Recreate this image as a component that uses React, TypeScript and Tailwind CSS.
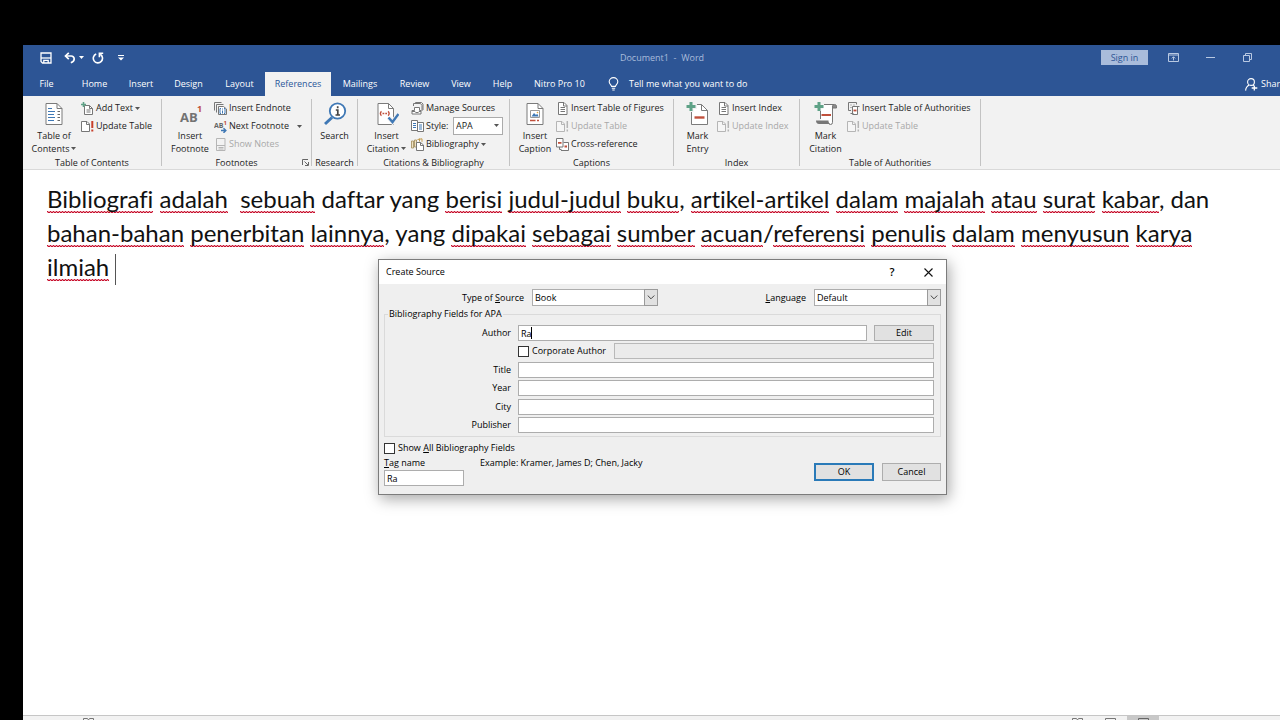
import React from "react";

type IconProps = { className?: string };

const GREEN = "#5fa287";
const RED = "#c0503c";
const BLUE = "#3f78b5";

/* ---------- Title bar icons ---------- */

function SaveIcon() {
  return (
    <svg width="12" height="12" viewBox="0 0 12 12" fill="none" stroke="#fff" strokeWidth="1.3">
      <path d="M1 1h10v10H2.5L1 9.5z" />
      <path d="M1 6h10" />
      <path d="M3.8 11V8.3h4.4V11" />
    </svg>
  );
}

function UndoIcon() {
  return (
    <svg width="12" height="12" viewBox="0 0 12 12" fill="none" stroke="#fff" strokeWidth="1.7">
      <path d="M1.5 4h5.7a3 3 0 0 1 3 3c0 2-1.4 3.2-3.4 3.8" />
      <path d="M4.8.8 1.5 4l3.3 3.2" />
    </svg>
  );
}

function RepeatIcon() {
  return (
    <svg width="12" height="12" viewBox="0 0 12 12" fill="none" stroke="#fff" strokeWidth="1.6">
      <path d="M4.2 2A4.600 4.600 0 1 0 8.200 2.300" />
      <path d="M11.200 1.200H7.400v4" />
    </svg>
  );
}

function CustomizeIcon() {
  return (
    <svg width="6" height="6" viewBox="0 0 6 6" fill="#fff">
      <path d="M0 0h6v1H0zM0 2.4h6L3 5.6z" />
    </svg>
  );
}

function Caret({ className = "text-[#555]" }: IconProps) {
  return (
    <svg width="5" height="3" viewBox="0 0 5 3" fill="currentColor" className={`shrink-0 ${className}`}>
      <path d="M0 0h5L2.5 3z" />
    </svg>
  );
}

function RibbonOptionsIcon() {
  return (
    <svg width="11" height="9" viewBox="0 0 11 9" fill="none" stroke="#b9c9e2" strokeWidth="1">
      <path d="M.5.5h10v8H.5zM.5 2h10M5.5 7.4V4M3.8 5.4l1.7-1.7 1.7 1.7" />
    </svg>
  );
}

function MinimizeIcon() {
  return (
    <svg width="9" height="9" viewBox="0 0 9 9" stroke="#b9c9e2">
      <path d="M0 4.5h9" />
    </svg>
  );
}

function RestoreIcon() {
  return (
    <svg width="9" height="9" viewBox="0 0 9 9" fill="none" stroke="#b9c9e2">
      <path d="M.5 2.5h6v6h-6zM2.5 2.500V.5h6v6H6.500" />
    </svg>
  );
}

function BulbIcon() {
  return (
    <svg width="11" height="14" viewBox="0 0 11 14" fill="none" stroke="#fff" strokeWidth="1.1">
      <path d="M3.600 9.400C3.400 7.800 1.200 7 1.200 4.700a4.300 4.100 0 0 1 8.600 0C9.800 7 7.600 7.800 7.400 9.400z" />
      <path d="M3.800 11.300h3.400M4.300 13h2.400" />
    </svg>
  );
}

function ShareIcon() {
  return (
    <svg width="13" height="13" viewBox="0 0 13 13" fill="none" stroke="#fff" strokeWidth="1.1">
      <circle cx="6" cy="4" r="3.400" />
      <path d="M.6 12.600C.8 9.600 2.200 8 4.200 7M7.800 7l1 .7" />
      <path d="M9.300 7.400v5.200M6.700 10h5.600" strokeWidth="1.300" />
    </svg>
  );
}

/* ---------- Large ribbon icons ---------- */

function TocIcon() {
  return (
    <svg width="24" height="24" viewBox="0 0 24 24" fill="none">
      <path d="M4 1.500h11l5 5v16H4z" fill="#fff" stroke="#7b7b7b" />
      <path d="M15 1.500v5h5" stroke="#7b7b7b" />
      <path d="M6 6.500h4M6 9.500h7M6 12.500h6M6 15.500h7M6 18.500h6" stroke={BLUE} strokeWidth="1.200" />
      <path d="M15.500 9.500H18M15.500 12.500H18M15.500 15.500H18M15.500 18.500H18" stroke="#666" />
    </svg>
  );
}

function FootnoteIcon() {
  return (
    <svg width="24" height="24" viewBox="0 0 24 24">
      <text x="2" y="20" fontSize="13" fontWeight="700" fontFamily="Open Sans, sans-serif" fill="#737373">AB</text>
      <text x="19" y="10" fontSize="9" fontWeight="700" fontFamily="Open Sans, sans-serif" fill={RED}>1</text>
    </svg>
  );
}

function SearchInfoIcon() {
  return (
    <svg width="24" height="24" viewBox="0 0 24 24" fill="none">
      <path d="M9 15.500 2 22" stroke={BLUE} strokeWidth="3" />
      <circle cx="14.500" cy="9" r="7.700" fill="#fff" stroke={BLUE} strokeWidth="1.800" />
      <path d="M14.700 4.300v2M12.800 8h2v5M12.500 13h4.500" stroke="#444" strokeWidth="1.700" />
    </svg>
  );
}

function CitationIcon() {
  return (
    <svg width="24" height="24" viewBox="0 0 24 24" fill="none">
      <path d="M3 1.500h10.500l5 5v16H3z" fill="#fff" stroke="#7b7b7b" />
      <path d="M13.500 1.500v5h5" stroke="#7b7b7b" />
      <path d="M6.500 9.300c-1.500 1-1.500 3.400 0 4.400M13 9.300c1.500 1 1.500 3.400 0 4.400M7.500 11.500h1.800M10.300 11.500H12" stroke={RED} strokeWidth="1.400" />
      <path d="m13.500 15.500 4 4.500 6-8" stroke="#f2f2f2" strokeWidth="4.500" />
      <path d="m13.500 15.500 4 4.500 6-8" stroke={BLUE} strokeWidth="2.400" />
    </svg>
  );
}

function CaptionIcon() {
  return (
    <svg width="24" height="24" viewBox="0 0 24 24" fill="none">
      <path d="M4 1.500h11l5 5v16H4z" fill="#fff" stroke="#7b7b7b" />
      <path d="M15 1.500v5h5" stroke="#7b7b7b" />
      <path d="M7.500 8.500h9v7h-9z" stroke="#999" />
      <path d="m8.500 14.500 2.500-3.500 2 2 1.200-1.300 1.500 2.800z" fill={BLUE} />
      <circle cx="14.500" cy="10.500" r=".8" fill="#e0a33c" />
      <path d="M7 18.500h5.500M14 18.500h2" stroke={RED} strokeWidth="1.300" />
    </svg>
  );
}

function MarkEntryIcon() {
  return (
    <svg width="24" height="24" viewBox="0 0 24 24" fill="none">
      <path d="M5.500 8V22.500h16V8.500l-6-6H10" fill="#fff" stroke="#7b7b7b" />
      <path d="M15.500 2.500v6h6" stroke="#7b7b7b" />
      <path d="M5 0v10M0 4.500h11" stroke="#f2f2f2" strokeWidth="5" />
      <path d="M5 0v9M.5 4.500h9" stroke={GREEN} strokeWidth="3" />
      <path d="M8.500 15.500h10" stroke={RED} strokeWidth="2.400" />
    </svg>
  );
}

function MarkCitationIcon() {
  return (
    <svg width="24" height="24" viewBox="0 0 24 24" fill="none">
      <path d="M6.500 18V2.500h12V19l-2 3H8z" fill="#fff" />
      <path d="M6.500 17V8M10 2.500h10M18.500 4v16.500a2 2 0 0 1-4 0" stroke="#777" />
      <path d="M18.500 7V4.200c0-2.300 4-2.300 4 0V6h-4" fill="#8b8b8b" stroke="#777" />
      <path d="M2 18.500h12.500c0 2 .5 3.500 2 3.500H5c-2 0-3-1.500-3-3.500z" fill="#777" />
      <path d="M5 0v9M.5 4.500h9" stroke="#f2f2f2" strokeWidth="4.500" />
      <path d="M5 0v9M.5 4.500h9" stroke={GREEN} strokeWidth="3" />
      <path d="M7.500 13h9.500" stroke={RED} strokeWidth="2" />
    </svg>
  );
}

/* ---------- Small ribbon icons ---------- */

function Small({ children }: { children: React.ReactNode }) {
  return (
    <svg width="13" height="13" viewBox="0 0 13 13" fill="none" className="shrink-0">
      {children}
    </svg>
  );
}

const AddTextIcon = () => (
  <Small>
    <path d="M3.500 3.500h5l3 3v6h-8z" fill="#fff" stroke="#777" />
    <path d="M8.500 3.500v3h3M5.500 8h4M5.500 10h4" stroke="#777" />
    <path d="M2.500 0v5M0 2.500h5" stroke={GREEN} strokeWidth="1.600" />
  </Small>
);

const UpdateIcon = ({ dim = false }: { dim?: boolean }) => (
  <Small>
    <path d="M.5 1.500H6l2.500 2.500v7.500h-8z" fill={dim ? "#f6f6f6" : "#fff"} stroke={dim ? "#b5b5b5" : "#777"} />
    <path d="M5.500 1.500V4.500h3" stroke={dim ? "#b5b5b5" : "#777"} />
    <path d="M11.300 1v7M11.300 9.500v2" stroke={dim ? "#b5b5b5" : "#c8402c"} strokeWidth={dim ? 1.5 : 2} />
  </Small>
);

const EndnoteIcon = () => (
  <Small>
    <path d="M.5 8.500v-8h7M2.500 10.500v-8h7" stroke="#777" />
    <path d="M4.500 4.500h5l3 2.500v5.500h-8z" fill="#fff" stroke="#777" />
    <path d="M7 6.500H6v5h1M10 6.500h1v5h-1M8.500 6.500v1M8.500 8.500v3" stroke={BLUE} />
  </Small>
);

const NextFootnoteIcon = () => (
  <Small>
    <text x="0" y="8" fontSize="7" fontWeight="700" fontFamily="Open Sans, sans-serif" fill="#666">AB</text>
    <text x="9.500" y="5" fontSize="6" fontWeight="700" fontFamily="Open Sans, sans-serif" fill={RED}>1</text>
    <path d="M7 10.500h4M9.500 8.200l2.300 2.300-2.300 2.300" stroke={BLUE} strokeWidth="1.500" />
  </Small>
);

const NotesIcon = () => (
  <Small>
    <path d="M2.500.5h8.500v12H2.500zM2.500 7.500h8.500M4.500 9.500h5M4.500 11h5" stroke="#b5b5b5" />
  </Small>
);

const ManageIcon = () => (
  <Small>
    <path d="M2.500 4V1.500h7l1.500 2V9M4.500 1.500V.5h6l1.500 1.500V8" stroke="#777" />
    <path d="M3.500 5.500h5v3h1.500v3.500h-9V8.500h2.500z" fill="#fff" stroke="#777" />
    <path d="M1 9.500h3l.7 1h2.600l.7-1h2" stroke="#777" />
  </Small>
);

const StyleIcon = () => (
  <Small>
    <path d="M.5.5h6v10h-6zM6.500 2.500h6v9h-6z" fill="#fff" stroke="#777" />
    <path d="M2 3.500h3M2 5.500h3M2 7.500h3" stroke={BLUE} />
    <path d="M8 5h3M8 7h3M8 9h3" stroke={BLUE} />
  </Small>
);

const BibliographyIcon = () => (
  <Small>
    <path d="M.5 3h2v7h-2zM3.500 2h2v7h-2z" fill="#efe3c4" stroke="#a08a58" strokeWidth=".8" />
    <path d="M6.500 1.500 11 .8v3M8.500.5v3" stroke="#c39b4a" />
    <path d="M5.500 4.500h4l3 2.500v5.500h-7z" fill="#fff" stroke="#777" />
    <path d="M9.500 4.500V7.500h3" stroke="#777" />
  </Small>
);

const PageIcon = () => (
  <Small>
    <path d="M2.500.5h5.500l3 3v9H2.500z" fill="#fff" stroke="#777" />
    <path d="M7.500.5v3.500h3.500M4.500 5.500h4.500M4.500 7.500h4.500M4.500 9.500h4.500" stroke="#777" />
  </Small>
);

const CrossRefIcon = () => (
  <Small>
    <path d="M.5.500h6.500v8.500H.5zM7.500 4.500h5v8H5" fill="#fff" stroke="#777" />
    <path d="M2 4.800h3.500M8.500 8.500h2.500" stroke={RED} strokeWidth="1.800" />
    <path d="M3.500 9v2.500h2" stroke="#777" />
  </Small>
);

const AuthoritiesIcon = () => (
  <Small>
    <path d="M1.500 8.500V.5h8v2M1.500 8.500H4" stroke="#777" />
    <path d="M3.500 3h1M6.500 3h1M3.500 5.500h1" stroke="#777" />
    <path d="M5.500 4.500h7M5.500 4.500v8h5v-8" fill="#fff" stroke="#777" />
    <path d="M6.500 8.500h3" stroke={RED} strokeWidth="1.800" />
    <path d="M3.500 11.500h3" stroke="#777" />
  </Small>
);

const LauncherIcon = () => (
  <svg width="7" height="7" viewBox="0 0 7 7" fill="none" stroke="#666">
    <path d="M.5 6V.5H6M2.500 2.500l3.500 3.500M6.500 3v3.500H3" />
  </svg>
);

/* ---------- Ribbon pieces ---------- */

function BigButton({
  icon,
  lines,
  caret,
  className = "",
}: {
  icon: React.ReactNode;
  lines: string[];
  caret?: boolean;
  className?: string;
}) {
  return (
    <button type="button" className={`flex shrink-0 flex-col items-center pt-[3px] text-center leading-[13px] ${className}`}>
      {icon}
      {lines.map((line, i) => (
        <span key={line} className={`flex items-center gap-[2px] whitespace-nowrap ${i === 0 ? "mt-[3px]" : ""}`}>
          {line}
          {caret && i === lines.length - 1 && <Caret />}
        </span>
      ))}
    </button>
  );
}

function Item({
  icon,
  children,
  caret,
  disabled,
}: {
  icon: React.ReactNode;
  children: React.ReactNode;
  caret?: "near" | "far";
  disabled?: boolean;
}) {
  return (
    <button
      type="button"
      disabled={disabled}
      className={`flex h-[18px] items-center gap-[2px] whitespace-nowrap ${disabled ? "text-[#a8a8a8]" : ""}`}
    >
      {icon}
      <span>{children}</span>
      {caret && <Caret className={caret === "far" ? "ml-[6px] text-[#555]" : "text-[#555]"} />}
    </button>
  );
}

function Group({
  title,
  className,
  launcher,
  children,
}: {
  title: string;
  className: string;
  launcher?: boolean;
  children: React.ReactNode;
}) {
  return (
    <section
      aria-label={title}
      className={`my-[3px] flex shrink-0 flex-col justify-between border-r border-[#c3c3c3] ${className}`}
    >
      <div className="flex">{children}</div>
      <div className="flex h-[7px] items-center">
        <h2 className="flex-1 text-center whitespace-nowrap">{title}</h2>
        {launcher && (
          <button type="button" aria-label={`${title} settings`} className="-ml-[9px] mr-[2px]">
            <LauncherIcon />
          </button>
        )}
      </div>
    </section>
  );
}

function Tab({ children, active, className }: { children: string; active?: boolean; className: string }) {
  return (
    <button
      type="button"
      role="tab"
      aria-selected={!!active}
      className={`h-full shrink-0 text-center whitespace-nowrap ${active ? "bg-[#f2f2f2] text-[#2b579a]" : "text-white"} ${className}`}
    >
      {children}
    </button>
  );
}

function Ribbon() {
  return (
    <div className="flex h-[74px] border-b border-[#d9d9d9] bg-[#f2f2f2] text-[9px] text-[#222]">
      <Group title="Table of Contents" className="w-[139px]">
        <BigButton className="w-[58px] pl-[4px]" icon={<TocIcon />} lines={["Table of", "Contents"]} caret />
        <div className="flex flex-col">
          <Item icon={<AddTextIcon />} caret="near">Add Text</Item>
          <Item icon={<UpdateIcon />}>Update Table</Item>
        </div>
      </Group>
      <Group title="Footnotes" className="w-[150px]" launcher>
        <BigButton className="w-[52px] pl-[4px]" icon={<FootnoteIcon />} lines={["Insert", "Footnote"]} />
        <div className="flex flex-col">
          <Item icon={<EndnoteIcon />}>Insert Endnote</Item>
          <Item icon={<NextFootnoteIcon />} caret="far">Next Footnote</Item>
          <Item icon={<NotesIcon />} disabled>Show Notes</Item>
        </div>
      </Group>
      <Group title="Research" className="w-[46px]">
        <BigButton className="w-full" icon={<SearchInfoIcon />} lines={["Search"]} />
      </Group>
      <Group title="Citations & Bibliography" className="w-[152px]">
        <BigButton className="w-[53px] pl-[4px]" icon={<CitationIcon />} lines={["Insert", "Citation"]} caret />
        <div className="flex flex-col">
          <Item icon={<ManageIcon />}>Manage Sources</Item>
          <div className="flex h-[18px] items-center gap-[2px]">
            <StyleIcon />
            <label htmlFor="citation-style" className="w-[25px]">Style:</label>
            <span className="relative flex">
              <select
                id="citation-style"
                defaultValue="APA"
                className="h-[18px] w-[50px] appearance-none border border-[#ababab] bg-white px-[2px]"
              >
                <option>APA</option>
              </select>
              <span className="pointer-events-none absolute top-[7px] right-1">
                <Caret />
              </span>
            </span>
          </div>
          <Item icon={<BibliographyIcon />} caret="near">Bibliography</Item>
        </div>
      </Group>
      <Group title="Captions" className="w-[164px]">
        <BigButton className="w-[46px] pl-[4px]" icon={<CaptionIcon />} lines={["Insert", "Caption"]} />
        <div className="flex flex-col">
          <Item icon={<PageIcon />}>Insert Table of Figures</Item>
          <Item icon={<UpdateIcon dim />} disabled>Update Table</Item>
          <Item icon={<CrossRefIcon />}>Cross-reference</Item>
        </div>
      </Group>
      <Group title="Index" className="w-[126px]">
        <BigButton className="w-[43px] pl-[4px]" icon={<MarkEntryIcon />} lines={["Mark", "Entry"]} />
        <div className="flex flex-col">
          <Item icon={<PageIcon />}>Insert Index</Item>
          <Item icon={<UpdateIcon dim />} disabled>Update Index</Item>
        </div>
      </Group>
      <Group title="Table of Authorities" className="w-[181px]">
        <BigButton className="w-[47px] pl-[4px]" icon={<MarkCitationIcon />} lines={["Mark", "Citation"]} />
        <div className="flex flex-col">
          <Item icon={<AuthoritiesIcon />}>Insert Table of Authorities</Item>
          <Item icon={<UpdateIcon dim />} disabled>Update Table</Item>
        </div>
      </Group>
    </div>
  );
}

/* ---------- Document ---------- */

/* Words between asterisks carry the spell-checker underline. */
const LINES = [
  "*Bibliografi* *adalah*  *sebuah* daftar yang *berisi* *judul-judul* *buku*, *artikel-artikel* *dalam* *majalah* *atau* *surat* *kabar*, dan",
  "*bahan-bahan* *penerbitan* *lainnya*, yang *dipakai* *sebagai* *sumber* *acuan*/*referensi* *penulis* *dalam* *menyusun* *karya*",
  "*ilmiah* ",
];

function Paragraph() {
  return (
    <p className="pt-3 pl-6 font-['Lato',sans-serif] text-[24px] leading-[34px] [font-variant-ligatures:none] whitespace-pre text-[#111]">
      {LINES.map((line, i) => (
        <span key={i} className="block">
          {line.split("*").map((part, j) =>
            j % 2 === 1 ? (
              <span
                key={j}
                className="bg-[linear-gradient(90deg,#c8102e_50%,#e9a3ae_50%),linear-gradient(90deg,#e9a3ae_50%,#c8102e_50%)] bg-[length:3px_1px,3px_1px] bg-[position:0_calc(100%-1px),0_100%] bg-repeat-x"
              >
                {part}
              </span>
            ) : (
              part
            ),
          )}
          {i === LINES.length - 1 && <span className="inline-block h-[31px] w-px bg-[#555] align-middle" />}
        </span>
      ))}
    </p>
  );
}

/* ---------- Dialog ---------- */

const INPUT = "h-4 min-w-0 border border-[#adadad] bg-white px-[2px] text-black outline-none";

function Dropdown({ id, value, className }: { id: string; value: string; className: string }) {
  return (
    <span className={`relative flex ${className}`}>
      <select
        id={id}
        defaultValue={value}
        className="h-[17px] w-full appearance-none border border-[#adadad] bg-white px-[2px] text-black"
      >
        <option>{value}</option>
      </select>
      <span className="pointer-events-none absolute inset-y-0 right-0 flex w-[14px] items-center justify-center border border-[#9a9a9a] bg-[#e1e1e1]">
        <svg width="8" height="5" viewBox="0 0 8 5" fill="none" stroke="#444">
          <path d="m.7.5 3.300 3.300L7.300.5" />
        </svg>
      </span>
    </span>
  );
}

function Check({ id }: { id: string }) {
  return (
    <input id={id} type="checkbox" className="h-[11px] w-[11px] shrink-0 appearance-none border border-[#333] bg-white" />
  );
}

function FieldRow({ label }: { label: string }) {
  const id = `field-${label.toLowerCase()}`;
  return (
    <div className="flex items-center">
      <label htmlFor={id} className="w-[127px] pr-[7px] text-right">{label}</label>
      <input id={id} type="text" className={`flex-1 ${INPUT}`} />
    </div>
  );
}

const BUTTON = "bg-[#e1e1e1] text-center text-black";

function CreateSourceDialog() {
  return (
    <div
      role="dialog"
      aria-label="Create Source"
      className="w-[569px] border border-[#7c7c7c] bg-[#efefef] text-[9px] leading-[12px] text-black shadow-[2px_4px_14px_rgba(0,0,0,0.35)]"
    >
      <header className="flex h-6 items-center bg-white pr-[13px] pl-[7px]">
        <h1 className="flex-1">Create Source</h1>
        <button type="button" aria-label="Help" className="w-5 text-[11px] font-semibold">?</button>
        <button type="button" aria-label="Close" className="ml-[21px] flex w-[10px] justify-center">
          <svg width="9" height="9" viewBox="0 0 9 9" fill="none" stroke="#111" strokeWidth="1.100">
            <path d="m.5.5 8 8M8.500.5l-8 8" />
          </svg>
        </button>
      </header>

      <div className="px-[5px] pt-[5px] pb-2">
        <div className="flex items-center">
          <label htmlFor="source-type" className="w-[148px] pr-2 text-right">
            Type of <u>S</u>ource
          </label>
          <Dropdown id="source-type" value="Book" className="w-[126px]" />
          <label htmlFor="language" className="flex-1 pr-2 text-right">
            <u>L</u>anguage
          </label>
          <Dropdown id="language" value="Default" className="w-[127px]" />
        </div>

        <fieldset className="mt-[2px] border border-[#dadada] pr-[6px] pb-[3px] pl-[6px]">
          <legend className="-ml-[3px] px-px">Bibliography Fields for APA</legend>
          <div className="mt-[5px] flex h-[108px] flex-col justify-between">
            <div className="flex items-center">
              <label htmlFor="field-author" className="w-[127px] pr-[7px] text-right">Author</label>
              <span className="relative flex flex-1">
                <input id="field-author" type="text" defaultValue="Ra" className={`w-full ${INPUT}`} />
                <span className="absolute top-[2px] left-[13px] h-3 w-px bg-black" />
              </span>
              <button type="button" className={`ml-[7px] h-4 w-[60px] border border-[#adadad] ${BUTTON}`}>
                Edit
              </button>
            </div>
            <div className="flex items-center pl-[127px]">
              <Check id="corporate" />
              <label htmlFor="corporate" className="w-[85px] pl-[3px] whitespace-nowrap">Corporate Author</label>
              <input
                type="text"
                aria-label="Corporate Author name"
                disabled
                className="h-4 min-w-0 flex-1 border border-[#b9b9b9] bg-[#ebebeb]"
              />
            </div>
            <FieldRow label="Title" />
            <FieldRow label="Year" />
            <FieldRow label="City" />
            <FieldRow label="Publisher" />
          </div>
        </fieldset>

        <div className="mt-[5px] flex h-3 items-center">
          <Check id="show-all" />
          <label htmlFor="show-all" className="pl-[3px]">
            Show <u>A</u>ll Bibliography Fields
          </label>
        </div>

        <div className="mt-[3px] flex">
          <div className="flex w-[96px] flex-col">
            <label htmlFor="tag-name">
              <u>T</u>ag name
            </label>
            <input id="tag-name" type="text" defaultValue="Ra" className={`mt-px w-[80px] ${INPUT}`} />
          </div>
          <p className="flex-1">Example: Kramer, James D; Chen, Jacky</p>
          <div className="flex items-center gap-2">
            <button type="button" className={`h-[18px] w-[60px] border-2 border-[#2a7ab8] ${BUTTON}`}>OK</button>
            <button type="button" className={`h-[18px] w-[59px] border border-[#adadad] ${BUTTON}`}>Cancel</button>
          </div>
        </div>
      </div>
    </div>
  );
}

/* ---------- App ---------- */

export default function App() {
  return (
    <div className="flex h-screen flex-col overflow-hidden bg-black pt-[45px] pl-[23px] font-['Open_Sans','Noto_Sans',sans-serif]">
      <header className="bg-[#2d5595] text-[9px] text-white">
        <div className="flex h-[27px] items-center pb-[2px]">
          <div className="flex flex-1 items-center pl-[17px]">
            <button type="button" aria-label="Save"><SaveIcon /></button>
            <button type="button" aria-label="Undo" className="ml-3 flex items-center gap-[3px]">
              <UndoIcon />
              <Caret className="text-white" />
            </button>
            <button type="button" aria-label="Repeat" className="ml-2"><RepeatIcon /></button>
            <button type="button" aria-label="Customize toolbar" className="ml-[14px]"><CustomizeIcon /></button>
          </div>
          <div className="pl-8 whitespace-pre text-[#a9bcdb]">Document1  -  Word</div>
          <div className="flex flex-1 items-center justify-end pr-7">
            <button type="button" className="h-[15px] w-[47px] bg-[#a9bcdb] text-center leading-[15px] text-[#2d5595]">
              Sign in
            </button>
            <button type="button" aria-label="Ribbon display options" className="ml-[20px]"><RibbonOptionsIcon /></button>
            <button type="button" aria-label="Minimize" className="ml-[27px]"><MinimizeIcon /></button>
            <button type="button" aria-label="Restore" className="ml-7"><RestoreIcon /></button>
          </div>
        </div>
        <div className="flex h-6 items-center">
          <div role="tablist" className="flex h-full">
            <Tab className="w-[47px]">File</Tab>
            <Tab className="w-[49px]">Home</Tab>
            <Tab className="w-[44px]">Insert</Tab>
            <Tab className="w-[51px]">Design</Tab>
            <Tab className="w-[51px]">Layout</Tab>
            <Tab className="w-[66px]" active>References</Tab>
            <Tab className="w-[58px]">Mailings</Tab>
            <Tab className="w-[51px]">Review</Tab>
            <Tab className="w-[42px]">View</Tab>
            <Tab className="w-[41px]">Help</Tab>
            <Tab className="w-[73px]">Nitro Pro 10</Tab>
          </div>
          <button type="button" className="ml-[12px] flex items-center gap-[10px] whitespace-nowrap">
            <BulbIcon />
            Tell me what you want to do
          </button>
          <button type="button" className="ml-auto flex w-[35px] items-center gap-[3px] overflow-hidden whitespace-nowrap">
            <span className="shrink-0"><ShareIcon /></span>
            Share
          </button>
        </div>
      </header>

      <Ribbon />

      <main className="relative flex-1 bg-white">
        <Paragraph />
        <div className="absolute inset-x-0 top-[89px] flex justify-center pl-[22px]">
          <CreateSourceDialog />
        </div>
      </main>

      <footer className="flex h-[5px] shrink-0 items-start overflow-hidden border-t border-[#c6c6c6] bg-[#f2f2f2] pr-[121px] pl-[60px]">
        <svg width="11" height="4" viewBox="0 0 11 4" fill="none" stroke="#777">
          <path d="M.5 4V2.500h4l1 1.500 1-1.500h4V4" />
        </svg>
        <svg width="11" height="4" viewBox="0 0 11 4" fill="none" stroke="#777" className="ml-auto">
          <path d="M.5 4V2.500h4l1 1.500 1-1.500h4V4" />
        </svg>
        <svg width="11" height="4" viewBox="0 0 11 4" fill="none" stroke="#777" className="ml-[22px]">
          <path d="M.5 4V2.500h10V4" />
        </svg>
        <span className="ml-[11px] flex w-8 justify-center bg-[#c8c8c8]">
          <svg width="11" height="4" viewBox="0 0 11 4" fill="none" stroke="#666">
            <path d="M.5 4V2.500h10V4" />
          </svg>
        </span>
      </footer>
    </div>
  );
}
